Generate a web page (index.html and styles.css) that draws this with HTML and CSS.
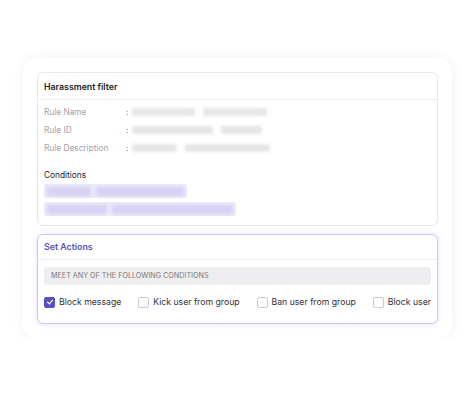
FILE: index.html
```html
<!DOCTYPE html>
<html lang="en">
<head>
    <meta charset="UTF-8">
    <title>Harassment filter</title>
    <link rel="stylesheet" href="styles.css">
</head>
<body>
    <div class="panel">
        <div class="card">
            <div class="card-head">Harassment filter</div>
            <div class="card-body">
                <div class="field">
                    <span class="label">Rule Name</span>
                    <span class="colon">:</span>
                    <span class="skel"><i style="width: 63px"></i><i style="width: 64px"></i></span>
                </div>
                <div class="field">
                    <span class="label">Rule ID</span>
                    <span class="colon">:</span>
                    <span class="skel"><i style="width: 81px"></i><i style="width: 41px"></i></span>
                </div>
                <div class="field">
                    <span class="label">Rule Description</span>
                    <span class="colon">:</span>
                    <span class="skel"><i style="width: 45px"></i><i style="width: 85px"></i></span>
                </div>

                <div class="conditions">
                    <div class="cond-title">Conditions</div>
                    <div class="pill" style="width: 143px"><i style="width: 44px"></i><i></i></div>
                    <div class="pill" style="width: 192px"><i style="width: 60px"></i><i></i></div>
                </div>
            </div>
        </div>

        <div class="card actions">
            <div class="card-head">Set Actions</div>
            <div class="card-body">
                <div class="match">MEET ANY OF THE FOLLOWING CONDITIONS</div>
                <div class="checks">
                    <label class="check"><span class="box on">
                        <svg viewBox="0 0 10 10" width="10" height="10"><path d="M2.6 5.2l1.7 1.6 3.1-3.4" fill="none" stroke="#fff" stroke-width="1.2" stroke-linecap="round" stroke-linejoin="round"/></svg>
                    </span>Block message</label>
                    <label class="check"><span class="box"></span>Kick user from group</label>
                    <label class="check"><span class="box"></span>Ban user from group</label>
                    <label class="check"><span class="box"></span>Block user</label>
                </div>
            </div>
        </div>
    </div>
</body>
</html>
```

FILE: styles.css
```css
body {
    margin: 0;
    padding: 58px 0 0 23px;
    background: #fff;
    font-family: Inter, 'Noto Sans', sans-serif;
    color: #222;
}
.panel {
    width: 429px;
    height: 281px;
    box-sizing: border-box;
    padding: 14px 14px 15px;
    background: #fff;
    border-radius: 14px;
    box-shadow: 0 0 14px rgba(0,0,0,0.06);
    display: flex;
    flex-direction: column;
    gap: 8px;
}
.card {
    background: #fff;
    border: 1px solid #e7e7e9;
    border-radius: 6px;
}
.card-head {
    height: 26px;
    line-height: 27px;
    padding: 0 6px;
    font-size: 8.8px;
    font-weight: 600;
    color: #1d1d1f;
    border-bottom: 1px solid #ececee;
}
.card-body {
    padding: 3px 6px 9px;
}
.field {
    height: 18px;
    display: flex;
    align-items: center;
    font-size: 8.3px;
    color: #a3a3a8;
}
.label {
    width: 82px;
}
.colon {
    width: 6px;
    color: #777;
}
.skel {
    display: flex;
    gap: 8px;
}
.skel i, .pill i {
    display: block;
    height: 8px;
    background: #e6e6e8;
    border-radius: 2px;
    filter: blur(1.6px);
}
.conditions {
    margin-top: 13px;
}
.cond-title {
    height: 11px;
    line-height: 11px;
    font-size: 8.3px;
    color: #222;
    margin-bottom: 3px;
}
.pill {
    height: 14px;
    background: #ebe8fb;
    border-radius: 3px;
    display: flex;
    align-items: center;
    gap: 5px;
    padding: 0 3px;
    box-sizing: border-box;
}
.pill + .pill {
    margin-top: 4px;
}
.pill i {
    height: 9px;
    background: #d7d2f3;
}
.pill i:last-child {
    flex: 1;
}
.actions {
    flex: 1;
    border-color: #cdc7f0;
    box-shadow: 0 0 6px rgba(120,100,220,0.18);
}
.actions .card-head {
    height: 24px;
    line-height: 24px;
    color: #5a4fc4;
}
.actions .card-body {
    padding: 7px 6px 0;
}
.match {
    height: 18px;
    line-height: 18px;
    background: #eeeef0;
    border-radius: 3px;
    padding: 0 7px;
    font-size: 7.2px;
    color: #7a7a80;
}
.checks {
    display: flex;
    justify-content: space-between;
    align-items: center;
    height: 12px;
    margin-top: 11px;
    font-size: 8.7px;
    color: #333;
}
.check {
    display: flex;
    align-items: center;
    gap: 4px;
}
.box {
    width: 9px;
    height: 9px;
    border: 1px solid #c9c9cd;
    border-radius: 2px;
    display: flex;
}
.box.on {
    background: #5a4fc4;
    border-color: #5a4fc4;
}
.box svg {
    margin: -0.5px;
}
```
